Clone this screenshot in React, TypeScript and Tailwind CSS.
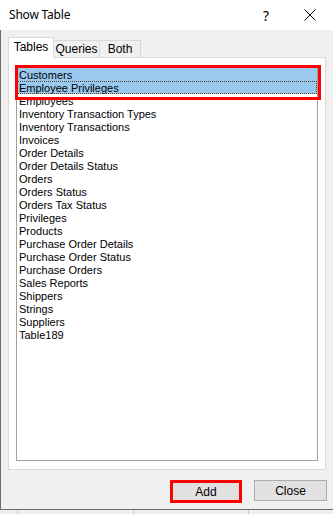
import { useState } from "react";

const tables = [
  "Customers",
  "Employee Privileges",
  "Employees",
  "Inventory Transaction Types",
  "Inventory Transactions",
  "Invoices",
  "Order Details",
  "Order Details Status",
  "Orders",
  "Orders Status",
  "Orders Tax Status",
  "Privileges",
  "Products",
  "Purchase Order Details",
  "Purchase Order Status",
  "Purchase Orders",
  "Sales Reports",
  "Shippers",
  "Strings",
  "Suppliers",
  "Table189",
];

const tabs = ["Tables", "Queries", "Both"];

function App() {
  const [tab, setTab] = useState(0);
  const [selected, setSelected] = useState<number[]>([0, 1]);

  const toggle = (i: number) => {
    setSelected((s) => (s.includes(i) ? s.filter((x) => x !== i) : [...s, i]));
  };

  return (
    <div className="w-[333px] h-[514px] overflow-hidden bg-white flex flex-col font-['Liberation_Sans',Arial,sans-serif] text-black">
      {/* title bar */}
      <div className="h-[30px] shrink-0 bg-white flex items-center pl-[9px]">
        <span className="text-[12px] font-['Noto_Sans',sans-serif] tracking-[-0.2px]">Show Table</span>
        <span className="ml-auto mr-[35px] text-[14px] font-['Noto_Sans',sans-serif]">?</span>
        <svg width="12" height="12" viewBox="0 0 12 12" className="mr-[17px]">
          <path d="M0.5 0.5 L11.5 11.5 M11.5 0.5 L0.5 11.5" stroke="#000" strokeWidth="1" />
        </svg>
      </div>

      {/* body */}
      <div className="h-[480px] shrink-0 bg-[#f0f0f0] border-l border-b border-[#6b6b6b] flex flex-col pt-[7px] pl-[7px]">
        {/* tabs */}
        <div className="flex items-end h-[20px] relative z-10">
          {tabs.map((t, i) =>
            i === tab ? (
              <button
                key={t}
                onClick={() => setTab(i)}
                className="h-[21px] w-[46px] -mb-px bg-white border border-b-0 border-[#d9d9d9] text-[12px] leading-[18px] pb-[2px]"
              >
                {t}
              </button>
            ) : (
              <button
                key={t}
                onClick={() => setTab(i)}
                className={
                  "h-[17px] bg-[#f0f0f0] border border-b-0 border-[#d9d9d9] text-[12px] leading-[16px] -ml-px " +
                  (i === 1 ? "w-[47px]" : "w-[42px]")
                }
              >
                {t}
              </button>
            )
          )}
        </div>

        {/* panel */}
        <div className="w-[318px] h-[413px] bg-white border border-[#d9d9d9] pt-[8px] pl-[7px]">
          <div className="relative w-[302px] h-[395px] border border-[#a0a0a0] pt-px">
            {tables.map((t, i) => (
              <div
                key={t}
                onClick={() => toggle(i)}
                className={
                  "h-[13px] leading-[12px] pt-px text-[11px] pl-[2px] whitespace-nowrap cursor-default " +
                  (selected.includes(i) ? "bg-[#99c9ef] " : "") +
                  (i === 1 ? "outline outline-1 outline-dotted outline-[#6b3d1a] -outline-offset-1" : "")
                }
              >
                {t}
              </div>
            ))}
            <div className="absolute left-[-2px] top-[-2px] w-[306px] h-[35px] border-[3px] border-[#ff0000] pointer-events-none" />
          </div>
        </div>

        {/* buttons */}
        <div className="flex justify-end items-start gap-[12px] mt-[10px] pr-[6px]">
          <div className="w-[72px] h-[23px] border-[3px] border-[#ff0000] bg-[#e1e1e1] flex items-center justify-center text-[12px]">
            Add
          </div>
          <button className="w-[73px] h-[21px] border border-[#adadad] bg-[#e1e1e1] text-[12px]">
            Close
          </button>
        </div>
      </div>

      {/* sheet behind */}
      <div className="flex-1 bg-[#eeeeee] flex">
        <div className="w-[18px] border-r border-[#c8ccd4]" />
        <div className="w-[116px] border-r border-[#c8ccd4]" />
        <div className="w-[115px] border-r border-[#c8ccd4]" />
      </div>
    </div>
  );
}

export default App;
